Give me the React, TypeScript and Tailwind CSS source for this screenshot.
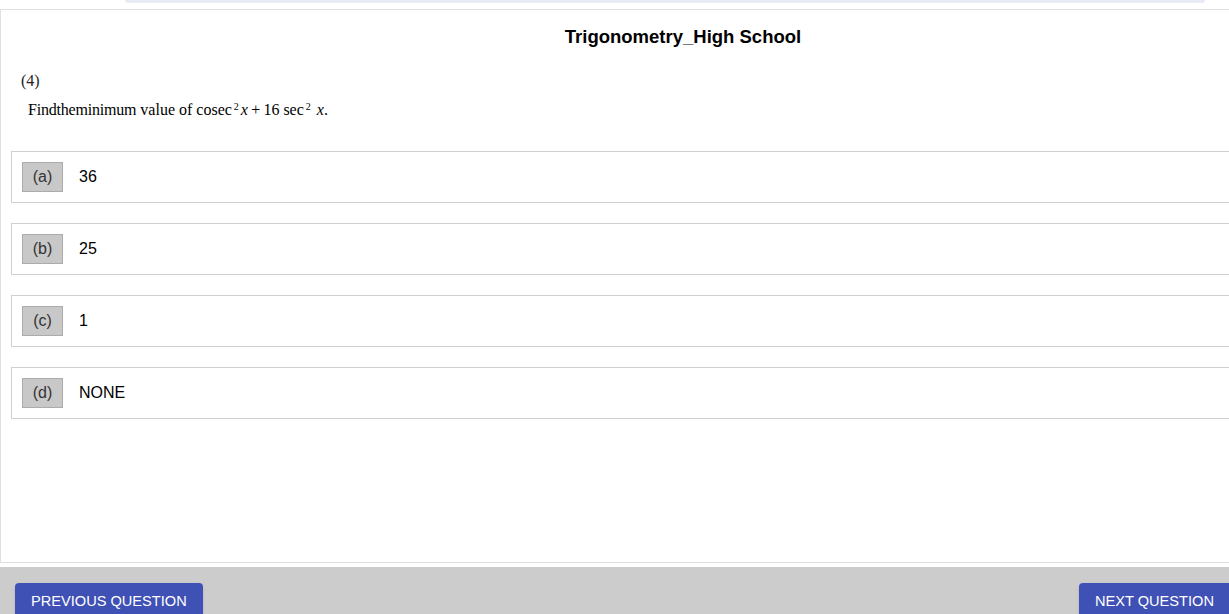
const OPTIONS = [
  { label: "(a)", text: "36" },
  { label: "(b)", text: "25" },
  { label: "(c)", text: "1" },
  { label: "(d)", text: "NONE" },
];

function Question() {
  return (
    <p className="pl-[27px] mt-[9px] text-[16px] leading-[20px] text-black font-['Liberation_Serif',serif]">
      <span className="tracking-[-0.2px]">Findtheminimum</span> value of cosec
      <sup className="text-[10px] mx-[2px]">2</sup>
      <i>x</i>{"\u2009+\u200916"} sec<sup className="text-[10px] mx-[2px]">2</sup> <i>x</i>.
    </p>
  );
}

export default function App() {
  return (
    <div className="w-[1229px] h-[614px] overflow-hidden bg-white font-['Liberation_Sans',Arial,sans-serif]">
      {/* search bar edge */}
      <div className="h-[9px]">
        <div className="ml-[125px] w-[1080px] h-[3px] bg-[#e8eaf6] rounded-b-[10px]" />
      </div>

      {/* question card */}
      <div className="w-[1366px] h-[554px] border border-[#e0e0e0] bg-white">
        <h1 className="mt-[16px] text-center text-[18.5px] leading-[22px] font-bold text-black">
          Trigonometry_High School
        </h1>
        <p className="pl-[20px] mt-[23px] text-[16px] leading-[20px] text-[#222] font-['Liberation_Serif',serif]">(4)</p>
        <Question />

        <div className="mt-[31px] ml-[10px] flex flex-col gap-[20px]">
          {OPTIONS.map((o) => (
            <div key={o.label} className="h-[52px] border border-[#d0d0d0] p-[10px] flex items-center gap-[16px]">
              <div className="w-[41px] h-[30px] bg-[#c8c8c8] border border-[#ababab] flex items-center justify-center text-[16px] text-[#333]">
                {o.label}
              </div>
              <span className="text-[16px] text-black">{o.text}</span>
            </div>
          ))}
        </div>
      </div>

      {/* nav bar */}
      <div className="mt-[4px] h-[60px] bg-[#cccccc] flex justify-between items-start pl-[15px] pt-[16px]">
        <button className="h-[36px] pt-[2px] px-[16px] rounded-[4px] bg-[#3f51b5] text-white text-[14.6px] uppercase shadow whitespace-nowrap">
          Previous Question
        </button>
        <button className="h-[36px] w-[150px] shrink-0 pt-[2px] pl-[16px] rounded-l-[4px] bg-[#3f51b5] text-white text-[14.6px] uppercase shadow text-left whitespace-nowrap">
          Next Question
        </button>
      </div>
    </div>
  );
}
